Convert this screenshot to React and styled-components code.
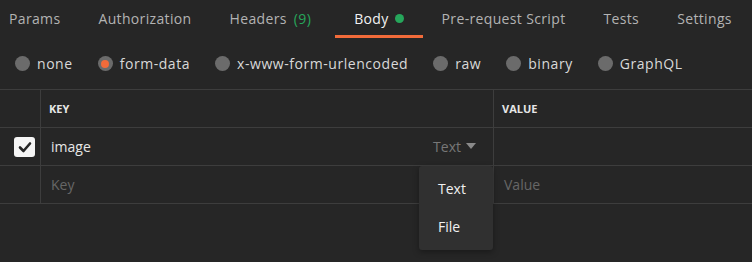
import React from 'react'
import styled, { createGlobalStyle } from 'styled-components'

const GlobalStyle = createGlobalStyle`
  body {
    margin: 0;
    background: #262626;
    font-family: "Open Sans", "Noto Sans", sans-serif;
  }
`

const Page = styled.div`
  width: 752px;
  height: 262px;
  background: #262626;
  overflow: hidden;
`

const TabBar = styled.div`
  display: flex;
  height: 38px;
`

const Tab = styled.div`
  display: flex;
  align-items: center;
  gap: 6px;
  padding: ${p => (p.first ? '2px 19px 0 9px' : '2px 19px 0')};
  font-size: 14px;
  letter-spacing: 0.35px;
  color: ${p => (p.active ? '#f2f2f2' : '#b3b3b3')};
  border-bottom: 3px solid ${p => (p.active ? '#f26b3a' : 'transparent')};
  box-sizing: border-box;
  white-space: nowrap;
`

const Count = styled.span`
  color: #26a65b;
  margin-left: 1px;
  margin-right: 5px;
`

const Dot = styled.span`
  width: 9px;
  height: 9px;
  border-radius: 50%;
  background: #26a65b;
`

const RadioRow = styled.div`
  display: flex;
  align-items: center;
  gap: 25px;
  height: 51px;
  padding-left: 15px;
`

const RadioItem = styled.label`
  display: flex;
  align-items: center;
  gap: 7px;
  font-size: 14px;
  letter-spacing: 0.55px;
  color: #d9d9d9;
`

const RadioCircle = styled.span`
  width: 15px;
  height: 15px;
  border-radius: 50%;
  background: #6b6b6b;
  display: flex;
  align-items: center;
  justify-content: center;
  &::after {
    content: '';
    width: 8px;
    height: 8px;
    border-radius: 50%;
    background: ${p => (p.checked ? '#f26b3a' : 'transparent')};
  }
`

const Table = styled.div`
  position: relative;
  border-top: 1px solid #3d3d3d;
`

const Row = styled.div`
  display: grid;
  grid-template-columns: 40px 453px 1fr;
  height: 38px;
  box-sizing: border-box;
  border-bottom: 1px solid #3d3d3d;
`

const Cell = styled.div`
  display: flex;
  align-items: center;
  padding-left: ${p => p.pad || 10}px;
  border-left: ${p => (p.divider ? '1px solid #3d3d3d' : 'none')};
  font-size: ${p => (p.head ? '11px' : '14px')};
  font-weight: ${p => (p.head ? 700 : 400)};
  color: ${p => (p.head ? '#e6e6e6' : p.muted ? '#666' : '#e6e6e6')};
  justify-content: ${p => (p.spread ? 'space-between' : 'flex-start')};
  padding-right: ${p => (p.spread ? '17px' : '0')};
`

const CheckCell = styled.div`
  display: flex;
  align-items: center;
  padding-left: 14px;
`

const Checkbox = styled.span`
  width: 21px;
  height: 20px;
  border-radius: 3px;
  background: #f5f5f5;
  display: flex;
  align-items: center;
  justify-content: center;
`

const TypeSelect = styled.span`
  display: flex;
  align-items: center;
  gap: 5px;
  color: #777;
  font-size: 14px;
`

const Menu = styled.div`
  position: absolute;
  left: 419px;
  top: 76px;
  width: 74px;
  padding: 3px 0 5px;
  background: #303030;
  border-radius: 3px;
  box-shadow: 0 2px 6px rgba(0, 0, 0, 0.35);
`

const MenuItem = styled.div`
  height: 38px;
  display: flex;
  align-items: center;
  padding-left: 19px;
  font-size: 14px;
  color: #f0f0f0;
`

const tabs = ['Params', 'Authorization', 'Headers', 'Body', 'Pre-request Script', 'Tests', 'Settings']
const modes = ['none', 'form-data', 'x-www-form-urlencoded', 'raw', 'binary', 'GraphQL']

export default function App() {
  return (
    <Page>
      <GlobalStyle />
      <TabBar>
        {tabs.map((t, i) => (
          <Tab key={t} first={i === 0} active={t === 'Body'}>
            {t}
            {t === 'Headers' && <Count>(9)</Count>}
            {t === 'Body' && <Dot />}
          </Tab>
        ))}
      </TabBar>
      <RadioRow>
        {modes.map(m => (
          <RadioItem key={m}>
            <RadioCircle checked={m === 'form-data'} />
            {m}
          </RadioItem>
        ))}
      </RadioRow>
      <Table>
        <Row>
          <CheckCell />
          <Cell head divider pad={8}>KEY</Cell>
          <Cell head divider pad={8}>VALUE</Cell>
        </Row>
        <Row>
          <CheckCell>
            <Checkbox>
              <svg width="14" height="12" viewBox="0 0 14 12">
                <path d="M2 6.5 L5.5 10 L12 2.5" fill="none" stroke="#262626" strokeWidth="2.6" strokeLinecap="round" strokeLinejoin="round" />
              </svg>
            </Checkbox>
          </CheckCell>
          <Cell divider spread>
            image
            <TypeSelect>
              Text
              <svg width="10" height="7" viewBox="0 0 10 7">
                <path d="M0 0 H10 L5 6 Z" fill="#8a8a8a" />
              </svg>
            </TypeSelect>
          </Cell>
          <Cell divider />
        </Row>
        <Row>
          <CheckCell />
          <Cell divider muted>Key</Cell>
          <Cell divider muted>Value</Cell>
        </Row>
        <Menu>
          <MenuItem>Text</MenuItem>
          <MenuItem>File</MenuItem>
        </Menu>
      </Table>
    </Page>
  )
}
